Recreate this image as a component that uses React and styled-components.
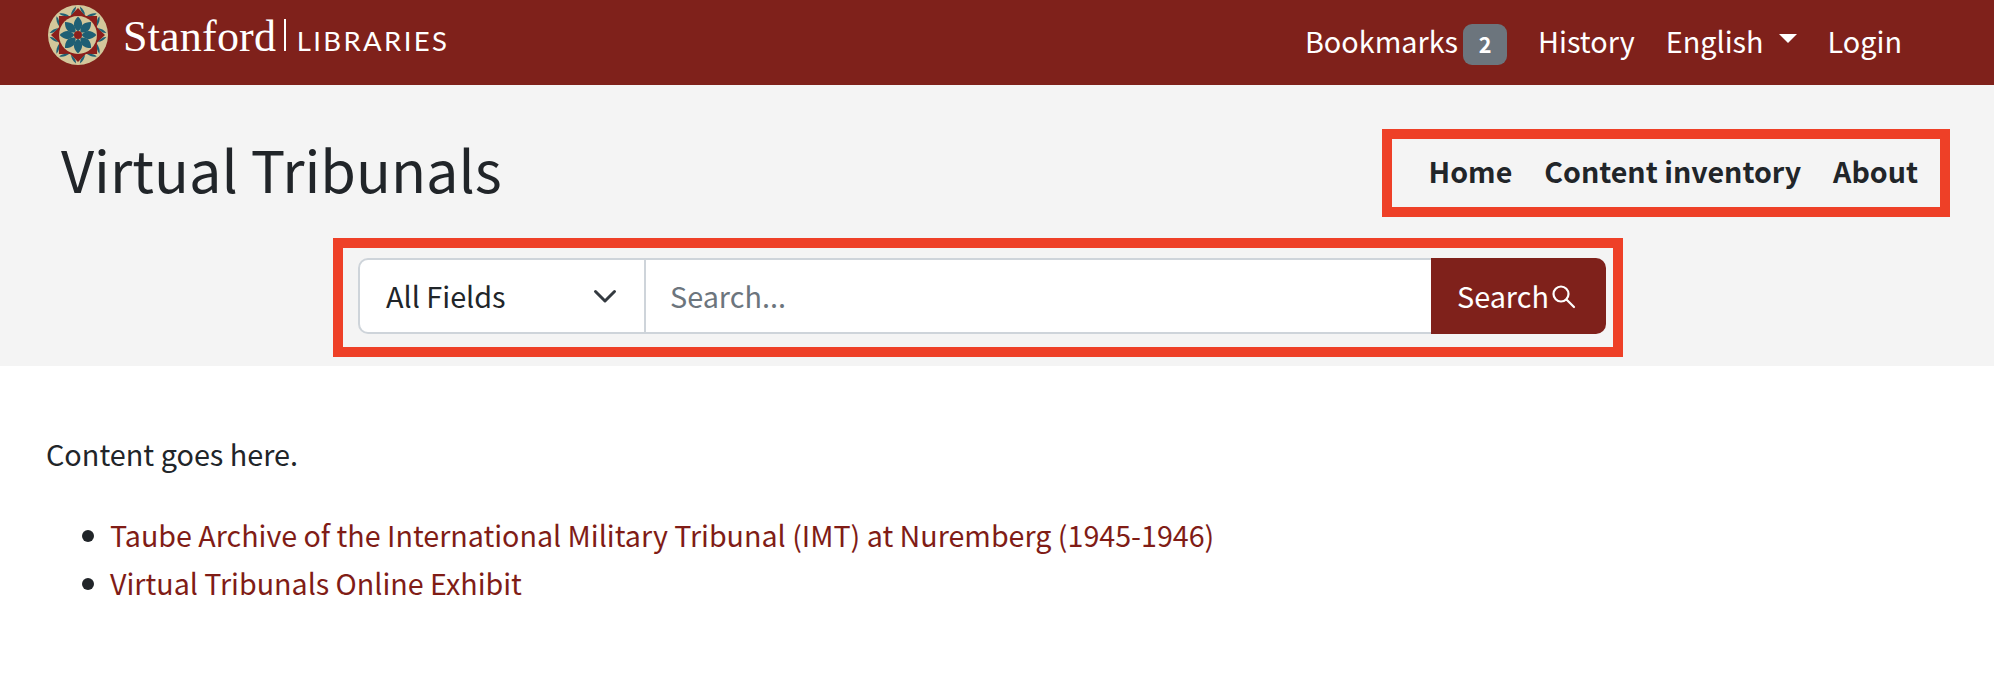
import React from "react";
import styled, { createGlobalStyle } from "styled-components";

const Global = createGlobalStyle`
  html, body { margin: 0; padding: 0; background: #fff; }
  body { font-family: "Noto Sans CJK SC", "Noto Sans", sans-serif; color: #212529; font-size: 28.8px; line-height: 1.5; }
`;
const Page = styled.div`width: 1994px; height: 682px; overflow: hidden;`;
const TopBar = styled.header`
  height: 85px; background: #7f211b; display: flex; align-items: flex-start; justify-content: space-between;
  padding: 0 92px 0 47px; box-sizing: border-box;
`;
const Brand = styled.a`display: flex; align-items: flex-start; color: #fff; padding-top: 4px;`;
const BrandName = styled.span`
  font-family: "Liberation Serif", serif; font-size: 44px; line-height: 1; margin: 11px 0 0 14px; letter-spacing: .2px;
`;
const BrandRule = styled.span`width: 1.5px; height: 32px; background: #fff; margin: 15px 11px 0 8px;`;
const BrandSub = styled.span`
  font-family: Lato, sans-serif; font-weight: 400; font-size: 27.5px; line-height: 1; letter-spacing: 2.4px; margin-top: 23px;
`;
const TopNav = styled.nav`display: flex; align-items: center; height: 85px; gap: 31px; padding-bottom: 3px; box-sizing: border-box;`;
const TopLink = styled.a`color: #fff; display: flex; align-items: center; white-space: nowrap;`;
const Badge = styled.span`
  width: 44px; height: 41px; margin: 7px 0 0 5px; border-radius: 9px; background: #6c757d; color: #fff;
  font-size: 21.6px; font-weight: 700; display: flex; align-items: center; justify-content: center;
`;
const Caret = styled.span`
  width: 0; height: 0; margin-left: 15px; margin-top: -5px; border-top: 9px solid #fff;
  border-left: 9px solid transparent; border-right: 9px solid transparent;
`;
const Masthead = styled.section`height: 281px; background: #f4f4f4; box-sizing: border-box; padding: 44px 44px 0 61px;`;
const TitleRow = styled.div`display: flex; justify-content: space-between; align-items: center;`;
const Title = styled.h1`margin: 0; padding-bottom: 8px; font-size: 57.6px; font-weight: 400; line-height: 1.2; color: #212529;`;
const Marked = styled.div`border: 10px solid #ee4027; box-sizing: border-box;`;
const SiteNav = styled(Marked)`
  width: 568px; height: 88px; display: flex; align-items: center; justify-content: flex-end; gap: 32px; padding: 0 22px 3px 0;
`;
const SiteLink = styled.a`font-weight: 700; font-size: 28.6px; color: #212529; white-space: nowrap;`;
const SearchMark = styled(Marked)`
  width: 1290px; height: 119px; margin: 21px 0 0 272px; padding: 10px 0 0 15px; display: flex; align-items: flex-start;
`;
const SearchGroup = styled.form`display: flex; width: 1248px; height: 76px;`;
const FieldSelect = styled.div`
  width: 288px; box-sizing: border-box; background: #fff; border: 2px solid #ced4da; border-radius: 10px 0 0 10px;
  display: flex; align-items: center; justify-content: space-between; padding: 0 27px 0 26px;
`;
const SearchInput = styled.div`
  flex: 1; box-sizing: border-box; background: #fff; border: 2px solid #ced4da; border-left: 0; border-right: 0;
  display: flex; align-items: center; padding-left: 24px; color: #6c757d;
`;
const SearchButton = styled.button`
  width: 175px; border: 0; background: #7f211b; color: #fff; border-radius: 0 10px 10px 0; font: inherit;
  display: flex; align-items: center; justify-content: flex-start; gap: 1px; padding: 0 0 0 26px;
`;
const Content = styled.main`padding: 64px 46px 0;`;
const Para = styled.p`margin: 0 0 33px; line-height: 48px;`;
const List = styled.ul`margin: 0; padding: 0 0 0 64px; list-style: none; line-height: 48px; font-size: 28.65px;`;
const Item = styled.li`
  display: flex; align-items: center;
  &::before {
    content: ""; width: 12px; height: 12px; border-radius: 50%; background: #212529;
    margin: 2px 16px 0 -28px; flex: none;
  }
`;
const TextLink = styled.a`color: #801c16;`;

const petals = Array.from({ length: 8 }, (_, i) => i * 45);
const outer = Array.from({ length: 8 }, (_, i) => 22.5 + i * 45);

function Seal() {
  return (
    <svg width="62" height="62" viewBox="-31 -31 62 62">
      <circle r="30" fill="#d3c79b" />
      <polygon
        fill="#8c1f1b"
        points={Array.from({ length: 16 }, (_, i) => {
          const r = i % 2 === 0 ? 27 : 20.5;
          const a = ((i * 22.5 - 90) * Math.PI) / 180;
          return `${(r * Math.cos(a)).toFixed(2)},${(r * Math.sin(a)).toFixed(2)}`;
        }).join(" ")}
      />
      <circle r="19" fill="#d3c79b" />
      {petals.map((a) => (
        <path key={a} d="M0 -3.5 C-5.5 -8 -5.5 -13 0 -18.5 C5.5 -13 5.5 -8 0 -3.5Z" fill="#1f5f74" transform={`rotate(${a})`} />
      ))}
      <circle r="4" fill="#8c1f1b" />
      {outer.map((a) => (
        <g key={a} transform={`rotate(${a})`}>
          <path d="M1 -21 C3 -24 5 -26 9 -27 C8 -24 5 -22 1 -21Z" fill="#1f5f74" />
          <path d="M-1 -21 C-3 -24 -5 -26 -9 -27 C-8 -24 -5 -22 -1 -21Z" fill="#1f5f74" />
        </g>
      ))}
    </svg>
  );
}

export default function App() {
  return (
    <Page>
      <Global />
      <TopBar>
        <Brand>
          <Seal />
          <BrandName>Stanford</BrandName>
          <BrandRule />
          <BrandSub>LIBRARIES</BrandSub>
        </Brand>
        <TopNav>
          <TopLink>Bookmarks<Badge>2</Badge></TopLink>
          <TopLink>History</TopLink>
          <TopLink>English<Caret /></TopLink>
          <TopLink>Login</TopLink>
        </TopNav>
      </TopBar>
      <Masthead>
        <TitleRow>
          <Title>Virtual Tribunals</Title>
          <SiteNav>
            <SiteLink>Home</SiteLink>
            <SiteLink>Content inventory</SiteLink>
            <SiteLink>About</SiteLink>
          </SiteNav>
        </TitleRow>
        <SearchMark>
          <SearchGroup>
            <FieldSelect>
              All Fields
              <svg width="24" height="16" viewBox="0 0 24 16" fill="none" stroke="#343a40" strokeWidth="3" strokeLinecap="round" strokeLinejoin="round">
                <path d="M2.5 3.5 12 13 21.5 3.5" />
              </svg>
            </FieldSelect>
            <SearchInput>Search...</SearchInput>
            <SearchButton type="button">
              Search
              <svg width="26" height="26" viewBox="0 0 26 26" fill="none" stroke="#fff" strokeWidth="2.2" strokeLinecap="round">
                <circle cx="11" cy="11" r="7.5" />
                <path d="M16.5 16.5 24 24" />
              </svg>
            </SearchButton>
          </SearchGroup>
        </SearchMark>
      </Masthead>
      <Content>
        <Para>Content goes here.</Para>
        <List>
          <Item><TextLink>Taube Archive of the International Military Tribunal (IMT) at Nuremberg (1945-1946)</TextLink></Item>
          <Item><TextLink>Virtual Tribunals Online Exhibit</TextLink></Item>
        </List>
      </Content>
    </Page>
  );
}
